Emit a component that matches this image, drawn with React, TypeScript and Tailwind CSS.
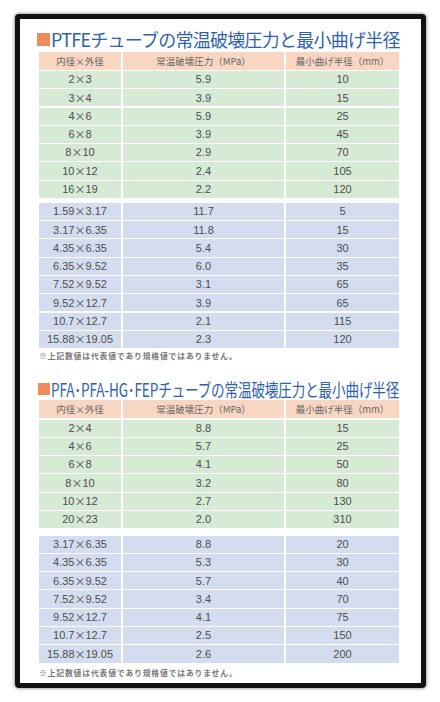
import React from "react";

const JP = '"Liberation Sans", "Noto Sans CJK JP", sans-serif';
const CJK = '"Noto Sans CJK JP", sans-serif';

type Row = [string, string, string];

const t1g: Row[] = [
  ["2", "3", "5.9"],
  ["3", "4", "3.9"],
  ["4", "6", "5.9"],
  ["6", "8", "3.9"],
  ["8", "10", "2.9"],
  ["10", "12", "2.4"],
  ["16", "19", "2.2"],
];
const t1gR = ["10", "15", "25", "45", "70", "105", "120"];
const t1b: Row[] = [
  ["1.59", "3.17", "11.7"],
  ["3.17", "6.35", "11.8"],
  ["4.35", "6.35", "5.4"],
  ["6.35", "9.52", "6.0"],
  ["7.52", "9.52", "3.1"],
  ["9.52", "12.7", "3.9"],
  ["10.7", "12.7", "2.1"],
  ["15.88", "19.05", "2.3"],
];
const t1bR = ["5", "15", "30", "35", "65", "65", "115", "120"];

const t2g: Row[] = [
  ["2", "4", "8.8"],
  ["4", "6", "5.7"],
  ["6", "8", "4.1"],
  ["8", "10", "3.2"],
  ["10", "12", "2.7"],
  ["20", "23", "2.0"],
];
const t2gR = ["15", "25", "50", "80", "130", "310"];
const t2b: Row[] = [
  ["3.17", "6.35", "8.8"],
  ["4.35", "6.35", "5.3"],
  ["6.35", "9.52", "5.7"],
  ["7.52", "9.52", "3.4"],
  ["9.52", "12.7", "4.1"],
  ["10.7", "12.7", "2.5"],
  ["15.88", "19.05", "2.6"],
];
const t2bR = ["20", "30", "40", "70", "75", "150", "200"];

function Times() {
  return (
    <span className="text-[11px]" style={{ fontFamily: CJK }}>
      ×
    </span>
  );
}

function DataRow({ r, c, bg }: { r: Row; c: string; bg: "g" | "b" }) {
  const bgc = bg === "g" ? "bg-[#d6ead5]" : "bg-[#d4ddf0]";
  const cell = `${bgc} h-[17.2px] flex items-center justify-center text-[11px] text-[#4d4d4d]`;
  return (
    <div className="grid grid-cols-[82px_161px_113px] gap-x-[2px]">
      <div className={cell}>
        {r[0]}
        <Times />
        {r[1]}
      </div>
      <div className={cell}>{r[2]}</div>
      <div className={cell}>{c}</div>
    </div>
  );
}

function Header({ h }: { h: string }) {
  const cell = `bg-[#f9d6c2] ${h} flex items-center justify-center text-[9.5px] text-[#666]`;
  return (
    <div className="grid grid-cols-[82px_161px_113px] gap-x-[2px]" style={{ fontFamily: CJK }}>
      <div className={cell}>内径×外径</div>
      <div className={cell}>常温破壊圧力（MPa）</div>
      <div className={cell}>最小曲げ半径（mm）</div>
    </div>
  );
}

function Group({ rows, right, bg }: { rows: Row[]; right: string[]; bg: "g" | "b" }) {
  return (
    <div className="flex flex-col gap-y-[1.1px]">
      {rows.map((r, i) => (
        <DataRow key={i} r={r} c={right[i]} bg={bg} />
      ))}
    </div>
  );
}

function Note({ cls }: { cls: string }) {
  return (
    <div
      className={`${cls} h-[14px] flex items-center text-[7.8px] tracking-[0.85px] text-[#777] font-bold whitespace-nowrap`}
      style={{ fontFamily: CJK }}
    >
      ※上記数値は代表値であり規格値ではありません。
    </div>
  );
}

export default function App() {
  return (
    <div className="w-[440px] h-[702px] bg-white pt-[14px] pl-[15px]" style={{ fontFamily: JP }}>
      <div className="w-[411px] h-[674px] border-[5px] border-[#111] rounded-[4px] shadow-[0_0_3px_1px_rgba(0,0,0,0.35)] bg-white pl-[17px] pt-[9px] overflow-hidden">
        {/* Title 1 */}
        <div className="h-[22px] flex items-center" style={{ fontFamily: CJK }}>
          <div className="w-[13px] h-[13px] shrink-0 bg-[#f08b5e] mr-[1px]" />
          <div className="text-[18px] leading-none text-[#2f62ae] tracking-[-0.75px] whitespace-nowrap font-normal">
            PTFEチューブの常温破壊圧力と最小曲げ半径
          </div>
        </div>
        <div className="pl-[2px]">
          <div className="mt-[2px]">
            <Header h="h-[17.5px]" />
          </div>
          <div className="mt-[1.5px]">
            <Group rows={t1g} right={t1gR} bg="g" />
          </div>
          <div className="mt-[5px]">
            <Group rows={t1b} right={t1bR} bg="b" />
          </div>
          <Note cls="mt-[1px]" />
        </div>

        {/* Title 2 */}
        <div className="mt-[15px] h-[22px] flex items-center" style={{ fontFamily: CJK }}>
          <div className="w-[12px] h-[12px] shrink-0 bg-[#f08b5e] mr-[1px] ml-[1px]" />
          <div className="text-[18px] leading-none text-[#2f62ae] whitespace-nowrap font-normal origin-left scale-x-[0.755] tracking-[-0.2px]">
            PFA･PFA-HG･FEPチューブの常温破壊圧力と最小曲げ半径
          </div>
        </div>
        <div className="pl-[2px]">
          <div>
            <Header h="h-[18px]" />
          </div>
          <div className="mt-[1.5px]">
            <Group rows={t2g} right={t2gR} bg="g" />
          </div>
          <div className="mt-[7.5px]">
            <Group rows={t2b} right={t2bR} bg="b" />
          </div>
          <Note cls="mt-[3px]" />
        </div>
      </div>
    </div>
  );
}
